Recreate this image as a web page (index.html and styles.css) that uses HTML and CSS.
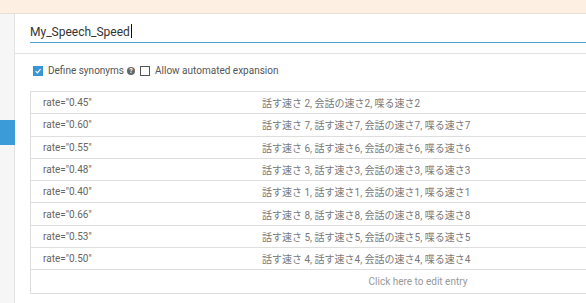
FILE: index.html
```html
<!DOCTYPE html>
<html lang="ja">
<head>
<meta charset="UTF-8">
<title>Entity – My_Speech_Speed</title>
<link rel="stylesheet" href="styles.css">
</head>
<body>
<div class="banner"></div>

<div class="page">
  <aside class="sidebar"><div class="side-active"></div></aside>

  <main class="content">
    <div class="name-row">
      <div class="name-input">My_Speech_Speed<span class="caret"></span></div>
    </div>

    <div class="options">
      <label class="opt"><span class="box checked">
        <svg viewBox="0 0 10 10" width="10" height="10"><path d="M2 5.2 L4.2 7.3 L8.2 2.6" fill="none" stroke="#fff" stroke-width="1.5"/></svg>
      </span>Define synonyms</label>
      <span class="help">?</span>
      <label class="opt"><span class="box"></span>Allow automated expansion</label>
    </div>

    <div class="entries">
      <div class="row"><div class="val">rate="0.45"</div><div class="syn">話す速さ 2, 会話の速さ2, 喋る速さ2</div></div>
      <div class="row"><div class="val">rate="0.60"</div><div class="syn">話す速さ 7, 話す速さ7, 会話の速さ7, 喋る速さ7</div></div>
      <div class="row"><div class="val">rate="0.55"</div><div class="syn">話す速さ 6, 話す速さ6, 会話の速さ6, 喋る速さ6</div></div>
      <div class="row"><div class="val">rate="0.48"</div><div class="syn">話す速さ 3, 話す速さ3, 会話の速さ3, 喋る速さ3</div></div>
      <div class="row"><div class="val">rate="0.40"</div><div class="syn">話す速さ 1, 話す速さ1, 会話の速さ1, 喋る速さ1</div></div>
      <div class="row"><div class="val">rate="0.66"</div><div class="syn">話す速さ 8, 話す速さ8, 会話の速さ8, 喋る速さ8</div></div>
      <div class="row"><div class="val">rate="0.53"</div><div class="syn">話す速さ 5, 話す速さ5, 会話の速さ5, 喋る速さ5</div></div>
      <div class="row"><div class="val">rate="0.50"</div><div class="syn">話す速さ 4, 話す速さ4, 会話の速さ4, 喋る速さ4</div></div>
      <div class="row last"><div class="val"></div><div class="syn edit">Click here to edit entry</div></div>
    </div>
  </main>
</div>
</body>
</html>
```

FILE: styles.css
```css
*,*::before,*::after{box-sizing:border-box;margin:0;padding:0}
body{
  width:586px;height:303px;
  overflow:hidden;
  background:#fff;
  font-family:Roboto,'Noto Sans CJK JP',sans-serif;
  color:#444;
}

/* BANNER */
.banner{
  height:14px;
  background:#fdf0e2;
  border-bottom:1px solid #eadfd5;
}

/* LAYOUT */
.page{display:flex;height:289px}
.sidebar{
  width:15px;flex:none;
  background:#f6f6f6;
  border-right:1px solid #e3e3e3;
  padding-top:106px;
}
.side-active{height:25px;background:#3b9ad8;margin-right:-1px}
.content{flex:1;min-width:0;overflow:hidden}

/* NAME */
.name-row{
  padding:10px 0 0 15px;
  border-bottom:1px solid #e2e2e2;
  height:40px;
}
.name-input{
  height:19px;
  border-bottom:1px solid #4a9fcd;
  font-size:12px;line-height:17px;
  color:#333;
}
.caret{
  display:inline-block;
  width:1px;height:14px;
  background:#111;
  vertical-align:-2px;
  margin-left:1px;
}

/* OPTIONS */
.options{
  display:flex;align-items:center;
  padding:0 0 4px 18px;
  height:37px;
  font-size:10px;color:#555;
}
.opt{display:flex;align-items:center;gap:5px}
.box{
  width:10px;height:10px;
  border:1px solid #555;
  background:#fff;
  display:flex;align-items:center;justify-content:center;
}
.box.checked{background:#3a95d6;border-color:#3a95d6}
.help{
  width:8px;height:8px;border-radius:50%;
  background:#666;color:#fff;
  font-size:7px;font-weight:700;line-height:8px;text-align:center;
  margin:0 5px 0 3px;
}

/* TABLE */
.entries{
  margin-left:15px;
  border-top:1px solid #dedede;
  border-left:1px solid #dedede;
  font-size:10px;color:#666;
}
.row{
  display:flex;
  height:22.3px;
  border-bottom:1px solid #dedede;
  align-items:center;
}
.row.last{height:23.3px}
.val{width:219px;flex:none;padding-left:12px}
.syn{flex:1;padding-left:12px;white-space:nowrap;color:#777}
.syn.edit{text-align:center;color:#999;padding-left:0}
```
